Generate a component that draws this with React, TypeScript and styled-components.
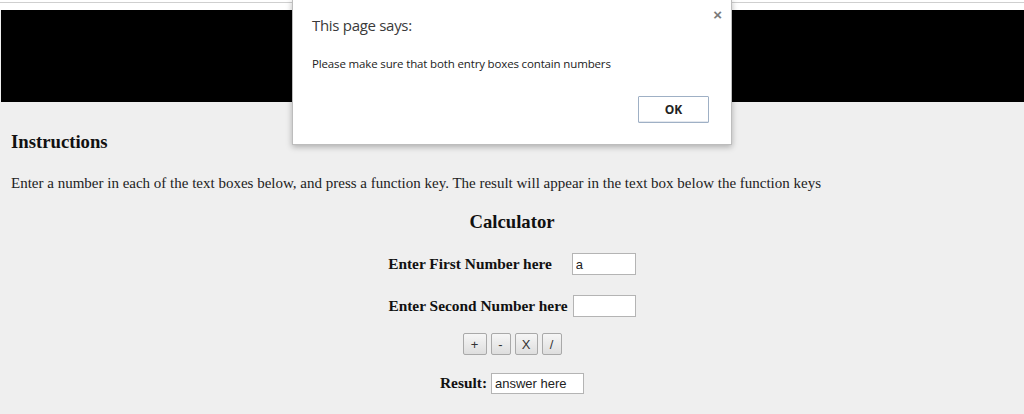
import React from "react";
import styled, { createGlobalStyle } from "styled-components";

const GlobalStyle = createGlobalStyle`
  html, body { margin: 0; padding: 0; }
  body {
    background: #efefef;
    font-family: "Liberation Serif", "Times New Roman", serif;
    color: #1e1e1e;
    width: 1024px;
    height: 414px;
    overflow: hidden;
  }
`;

const Page = styled.div`
  position: relative;
  width: 1024px;
  height: 414px;
  display: flex;
  flex-direction: column;
`;

const TopStrip = styled.div`
  height: 10px;
  background: #fff;
  display: flex;
  flex-direction: column;
  padding-top: 2px;
  box-sizing: border-box;
`;

const StripLine = styled.div`
  height: 1px;
  background: #cfcfcf;
`;

const Banner = styled.div`
  height: 92px;
  margin-left: 1px;
  background: #000;
`;

const Content = styled.main`
  display: flex;
  flex-direction: column;
  padding: 0 11px;
`;

const Heading = styled.h3`
  margin: 29px 0 0;
  font-size: 18.72px;
  line-height: 22px;
  font-weight: bold;
  color: #111;
`;

const Paragraph = styled.p`
  margin: 20px 0 0;
  font-size: 15px;
  line-height: 20px;
  color: #222;
`;

const Calculator = styled.section`
  display: flex;
  flex-direction: column;
  align-items: center;
  margin-top: 18px;
`;

const CalcTitle = styled.h3`
  margin: 0;
  font-size: 18.72px;
  line-height: 22px;
  font-weight: bold;
  color: #111;
`;

const Row = styled.div<{ $gap: number; $top: number }>`
  display: flex;
  align-items: center;
  gap: ${(p) => p.$gap}px;
  margin-top: ${(p) => p.$top}px;
  height: 22px;
`;

const Label = styled.label`
  font-size: 15.4px;
  font-weight: bold;
  color: #111;
`;

const TextBox = styled.input<{ $w: number; $h: number }>`
  width: ${(p) => p.$w}px;
  height: ${(p) => p.$h}px;
  box-sizing: border-box;
  border: 1px solid #b4b4b4;
  background: #fff;
  padding: 0 3px;
  margin: 0;
  font-family: "Liberation Sans", Arial, sans-serif;
  font-size: 13px;
  color: #222;
  outline: none;
`;

const KeyRow = styled.div`
  display: flex;
  gap: 4px;
  margin-top: 16px;
`;

const Key = styled.button<{ $w: number }>`
  width: ${(p) => p.$w}px;
  height: 22px;
  padding: 0;
  border: 1px solid #a9a9a9;
  border-radius: 2px;
  background: linear-gradient(#f6f6f6, #dedede);
  font-family: "Liberation Sans", Arial, sans-serif;
  font-size: 13px;
  color: #333;
`;

const Dialog = styled.div`
  position: absolute;
  left: 292px;
  top: -1px;
  width: 440px;
  height: 146px;
  box-sizing: border-box;
  background: #fff;
  border: 1px solid #bdbdbd;
  box-shadow: 0 2px 6px rgba(0, 0, 0, 0.28);
  display: flex;
  flex-direction: column;
  padding: 15px 20px 0 19px;
  font-family: "Open Sans", "Noto Sans", sans-serif;
`;

const DialogTitle = styled.div`
  font-size: 15px;
  line-height: 20px;
  color: #3a3a3a;
  letter-spacing: -0.3px;
`;

const DialogMessage = styled.div`
  margin-top: 21px;
  font-size: 11.5px;
  line-height: 16px;
  color: #222;
  letter-spacing: -0.15px;
`;

const DialogFooter = styled.div`
  display: flex;
  justify-content: flex-end;
  margin-top: 24px;
  padding-right: 2px;
`;

const OkButton = styled.button`
  width: 71px;
  height: 27px;
  border: 1px solid #9fb0c5;
  border-radius: 1px;
  background: #fff;
  box-shadow: inset 0 -1px 0 #e4e8ee;
  font-family: "Open Sans", "Noto Sans", sans-serif;
  font-weight: bold;
  font-size: 12px;
  color: #222;
`;

const Close = styled.span`
  position: absolute;
  right: 9px;
  top: 6px;
  font-family: "Liberation Sans", Arial, sans-serif;
  font-size: 15px;
  font-weight: bold;
  color: #7a7a7a;
`;

export default function App() {
  return (
    <>
      <GlobalStyle />
      <Page>
        <TopStrip>
          <StripLine />
        </TopStrip>
        <Banner />
        <Content>
          <Heading>Instructions</Heading>
          <Paragraph>
            Enter a number in each of the text boxes below, and press a function key. The result
            will appear in the text box below the function keys
          </Paragraph>
          <Calculator>
            <CalcTitle>Calculator</CalcTitle>
            <Row $gap={20} $top={20}>
              <Label>Enter First Number here</Label>
              <TextBox $w={64} $h={22} defaultValue="a" />
            </Row>
            <Row $gap={5} $top={20}>
              <Label>Enter Second Number here</Label>
              <TextBox $w={63} $h={22} defaultValue="" />
            </Row>
            <KeyRow>
              <Key $w={24}>+</Key>
              <Key $w={20}>-</Key>
              <Key $w={23}>X</Key>
              <Key $w={20}>/</Key>
            </KeyRow>
            <Row $gap={4} $top={17}>
              <Label>Result:</Label>
              <TextBox $w={93} $h={21} defaultValue="answer here" />
            </Row>
          </Calculator>
        </Content>
        <Dialog>
          <Close>×</Close>
          <DialogTitle>This page says:</DialogTitle>
          <DialogMessage>Please make sure that both entry boxes contain numbers</DialogMessage>
          <DialogFooter>
            <OkButton>OK</OkButton>
          </DialogFooter>
        </Dialog>
      </Page>
    </>
  );
}
